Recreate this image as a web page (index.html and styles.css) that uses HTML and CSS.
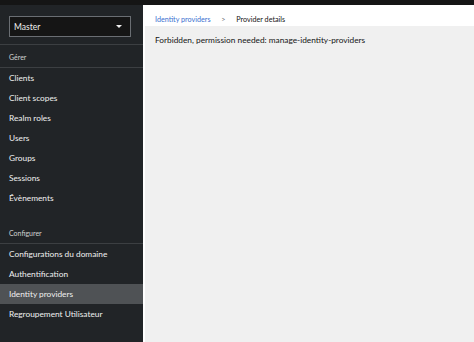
FILE: index.html
```html
<!DOCTYPE html>
<html lang="fr">

<head>
    <meta charset="UTF-8">
    <meta name="viewport" content="width=device-width, initial-scale=1.0">
    <title>Identity providers</title>
    <link rel="stylesheet" href="styles.css">
</head>

<body>
    <div class="topbar"></div>

    <div class="layout">
        <nav class="sidebar">
            <div class="realm-select">
                <span>Master</span>
                <span class="caret"></span>
            </div>

            <div class="group">
                <div class="group-title">Gérer</div>
                <a class="nav-item">Clients</a>
                <a class="nav-item">Client scopes</a>
                <a class="nav-item">Realm roles</a>
                <a class="nav-item">Users</a>
                <a class="nav-item">Groups</a>
                <a class="nav-item">Sessions</a>
                <a class="nav-item">Évènements</a>
            </div>

            <div class="group group-second">
                <div class="group-title">Configurer</div>
                <a class="nav-item">Configurations du domaine</a>
                <a class="nav-item">Authentification</a>
                <a class="nav-item current">Identity providers</a>
                <a class="nav-item">Regroupement Utilisateur</a>
            </div>
        </nav>

        <main class="content">
            <div class="breadcrumb">
                <a class="crumb-link">Identity providers</a>
                <span class="crumb-sep">&gt;</span>
                <span>Provider details</span>
            </div>
            <div class="page-body">
                Forbidden, permission needed: manage-identity-providers
            </div>
        </main>
    </div>
</body>

</html>
```

FILE: styles.css
```css
* {
    margin: 0;
    box-sizing: border-box;
}

body {
    margin: 0;
    height: 342px;
    overflow: hidden;
    font-family: Lato, "Open Sans", sans-serif;
    font-size: 8.3px;
    background-color: #f0f0f0;
}

.topbar {
    height: 5px;
    background-color: #151515;
}

.layout {
    display: flex;
    height: 337px;
}

.sidebar {
    width: 143px;
    flex-shrink: 0;
    background-color: #212427;
    color: #f0f0f0;
    padding-top: 11px;
}

.realm-select {
    margin: 0 12px 0 9px;
    height: 21px;
    border: 1px solid #6a6e73;
    background-color: #151515;
    display: flex;
    align-items: center;
    justify-content: space-between;
    padding: 0 8px 0 4px;
    font-size: 8.5px;
}

.caret {
    width: 0;
    height: 0;
    border-left: 3px solid transparent;
    border-right: 3px solid transparent;
    border-top: 3px solid #f0f0f0;
}

.group {
    margin-top: 7px;
    border-top: 1px solid #3c3f42;
}

.group-second {
    margin-top: 13px;
    border-top: none;
}

.group-title {
    height: 23px;
    padding-top: 2px;
    line-height: 20px;
    padding-left: 9px;
    font-size: 7px;
    color: #d2d2d2;
    border-bottom: 1px solid #3c3f42;
}

.nav-item {
    display: block;
    height: 20px;
    line-height: 20px;
    padding-left: 9px;
    font-size: 8.3px;
    color: #f0f0f0;
    white-space: nowrap;
}

.current {
    background-color: #4f5255;
}

.content {
    flex: 1;
    border-left: 2px solid #ffffff;
}

.breadcrumb {
    height: 21px;
    background-color: #ffffff;
    padding: 10px 0 0 10px;
    font-size: 7.2px;
    color: #151515;
}

.crumb-link {
    color: #3a6fcf;
}

.crumb-sep {
    margin: 0 9px;
    color: #6a6e73;
}

.page-body {
    padding: 9px 0 0 10px;
    font-size: 8.3px;
    color: #151515;
}
```
